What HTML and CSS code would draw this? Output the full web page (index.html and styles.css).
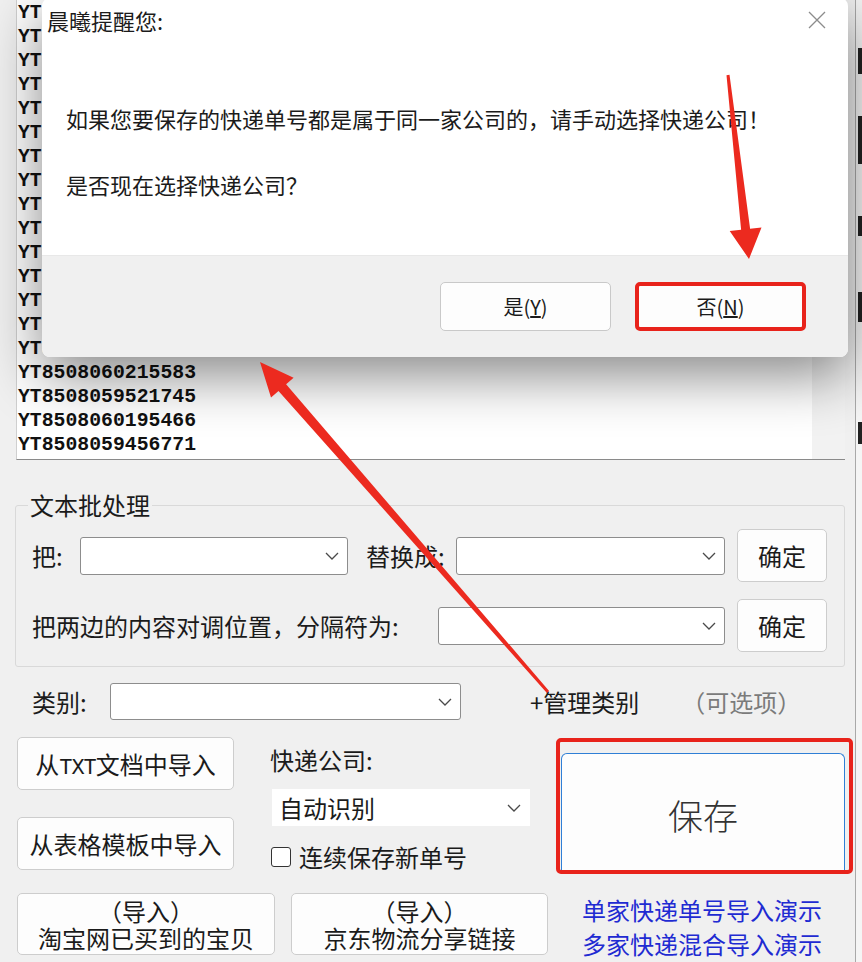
FILE: index.html
```html
<!DOCTYPE html>
<html lang="zh-CN">
<head>
    <meta charset="UTF-8">
    <meta name="viewport" content="width=device-width, initial-scale=1.0">
    <title>快递单号批量保存</title>
    <link rel="stylesheet" href="styles.css">
</head>
<body>
<div class="app">
    <div class="main">
        <!-- tracking number list -->
        <div class="log">
            <div class="lines">
                <div>YT8508060233517</div>
                <div>YT8508059687420</div>
                <div>YT8508060311284</div>
                <div>YT8508059772936</div>
                <div>YT8508060108853</div>
                <div>YT8508059840172</div>
                <div>YT8508060276341</div>
                <div>YT8508059519067</div>
                <div>YT8508060342798</div>
                <div>YT8508059663215</div>
                <div>YT8508060187450</div>
                <div>YT8508059724683</div>
                <div>YT8508060259132</div>
                <div>YT8508059498576</div>
                <div>YT8508060301949</div>
                <div>YT8508060215583</div>
                <div>YT8508059521745</div>
                <div>YT8508060195466</div>
                <div>YT8508059456771</div>
            </div>
            <div class="scrollbar"></div>
        </div>

        <div class="form">
            <fieldset class="batch">
                <legend>文本批处理</legend>
                <div class="row">
                    <span class="lbl w-ba">把:</span>
                    <div class="combo w-268"><svg class="chev" viewBox="0 0 14 8"><path d="M1 1l6 6 6-6"/></svg></div>
                    <span class="lbl w-replace">替换成:</span>
                    <div class="combo w-269"><svg class="chev" viewBox="0 0 14 8"><path d="M1 1l6 6 6-6"/></svg></div>
                    <button class="btn ok">确定</button>
                </div>
                <div class="row second">
                    <span class="lbl w-swap">把两边的内容对调位置，分隔符为:</span>
                    <div class="combo w-287"><svg class="chev" viewBox="0 0 14 8"><path d="M1 1l6 6 6-6"/></svg></div>
                    <button class="btn ok">确定</button>
                </div>
            </fieldset>

            <div class="category">
                <span class="lbl w-cat">类别:</span>
                <div class="combo short w-351"><svg class="chev" viewBox="0 0 14 8"><path d="M1 1l6 6 6-6"/></svg></div>
                <span class="manage">+管理类别</span>
                <span class="optional">（可选项）</span>
            </div>

            <div class="actions">
                <div class="imports">
                    <button class="btn import"><span>从<span class="latin">TXT</span>文档中导入</span></button>
                    <button class="btn import">从表格模板中导入</button>
                </div>
                <div class="courier">
                    <div class="courier-label">快递公司:</div>
                    <div class="courier-select">
                        <span>自动识别</span>
                        <svg class="chev" viewBox="0 0 14 8"><path d="M1 1l6 6 6-6"/></svg>
                    </div>
                    <label class="check"><span class="box"></span>连续保存新单号</label>
                </div>
                <div class="save-wrap">
                    <button class="save">保存</button>
                </div>
            </div>

            <div class="extras">
                <button class="btn wide w-258"><span>（导入）</span><span>淘宝网已买到的宝贝</span></button>
                <button class="btn wide w-257"><span>（导入）</span><span>京东物流分享链接</span></button>
                <div class="demo">
                    <a>单家快递单号导入演示</a>
                    <a>多家快递混合导入演示</a>
                </div>
            </div>
        </div>
    </div>
    <div class="edge">
        <span class="mark m1"></span>
        <span class="mark m2"></span>
        <span class="mark m3"></span>
        <span class="mark m4"></span>
        <span class="mark m5"></span>
    </div>

    <!-- message box on top -->
    <div class="dialog">
        <div class="dlg-body">
            <div class="dlg-head">
                <span class="dlg-title">晨曦提醒您:</span>
                <svg class="close" viewBox="0 0 18 18"><path d="M1 1l16 16M17 1L1 17"/></svg>
            </div>
            <p class="msg first">如果您要保存的快递单号都是属于同一家公司的，请手动选择快递公司！</p>
            <p class="msg">是否现在选择快递公司？</p>
        </div>
        <div class="dlg-foot">
            <button class="dlg-btn">是(<u>Y</u>)</button>
            <button class="dlg-btn focus">否(<u>N</u>)</button>
        </div>
    </div>

    <svg class="arrows" viewBox="0 0 862 962">
        <polygon points="729.5,74.8 726.5,75.2 741.1,229.7 729.7,231 749,259 761.5,227.4 750.1,228.7"/>
        <polygon points="549.1,691 546.9,693 278.5,390.9 271,397.5 260,362 293.6,377.7 286.1,384.3"/>
    </svg>
</div>
</body>
</html>
```

FILE: styles.css
```css
body {
    margin: 0;
    background: #f0f0f0;
}
button {
    font-family: inherit;
    color: inherit;
    padding: 0;
}
.app {
    position: relative;
    width: 862px;
    height: 962px;
    overflow: hidden;
    display: flex;
    background: #f0f0f0;
    font-family: "Noto Sans CJK SC", sans-serif;
    color: #1b1b1b;
}
.main {
    width: 855px;
}
.edge {
    flex: 1;
    border-left: 1px solid #a9a9a9;
    background: #f5f5f5;
    display: flex;
    flex-direction: column;
    align-items: flex-end;
}
.mark {
    width: 4px;
    background: #222;
}
.m1 { margin-top: 48px; height: 26px; }
.m2 { margin-top: 42px; height: 48px; }
.m3 { margin-top: 52px; height: 20px; }
.m4 { margin-top: 56px; height: 30px; }
.m5 { margin-top: 100px; height: 22px; }

/* list of numbers */
.log {
    margin-left: 16px;
    width: 829px;
    height: 460px;
    box-sizing: border-box;
    display: flex;
    background: #fff;
    border-left: 1px solid #cfcfcf;
    border-bottom: 1px solid #8a8a8a;
}
.lines {
    width: 794px;
    padding: 1px 0 0 1px;
    font: bold 19.8px/24px "Liberation Mono", monospace;
    color: #111;
}
.scrollbar {
    flex: 1;
    background: #f2f2f2;
}

/* form */
.form {
    padding-left: 15px;
}
.lbl {
    font-size: 24px;
    line-height: 30px;
    flex-shrink: 0;
}
.w-ba { width: 48px; }
.w-replace { width: 90px; margin-left: 18px; }
.w-swap { width: 406px; }
.w-cat { width: 78px; }
.w-268 { width: 268px; }
.w-269 { width: 269px; }
.w-287 { width: 287px; }
.w-351 { width: 351px; }
.w-258 { width: 258px; }
.w-257 { width: 257px; margin-left: 16px; }

.batch {
    margin: 30px 0 0;
    width: 830px;
    box-sizing: border-box;
    padding: 9px 17px 14px 16px;
    border: 1px solid #d9d9d9;
    border-radius: 3px;
}
.batch legend {
    margin-left: -4px;
    padding: 0 2px;
    font-size: 24px;
    line-height: 30px;
}
.row {
    display: flex;
    align-items: center;
    height: 53px;
}
.row.second {
    margin-top: 17px;
}
.combo {
    box-sizing: border-box;
    height: 38px;
    background: #fff;
    border: 1px solid #8d8d8d;
    border-radius: 3px;
    display: flex;
    align-items: center;
    justify-content: flex-end;
    padding-right: 8px;
    flex-shrink: 0;
}
.combo.short {
    height: 37px;
}
.chev {
    width: 14px;
    height: 8px;
    fill: none;
    stroke: #4a4a4a;
    stroke-width: 1.3;
}
.btn {
    box-sizing: border-box;
    background: #fdfdfd;
    border: 1px solid #cdcdcd;
    border-radius: 5px;
    font-size: 24px;
    display: flex;
    align-items: center;
    justify-content: center;
    flex-shrink: 0;
}
.btn.ok {
    width: 90px;
    height: 53px;
    margin-left: 12px;
}

.category {
    display: flex;
    align-items: center;
    margin-top: 16px;
    padding-left: 17px;
}
.manage {
    margin-left: 69px;
    font-size: 24px;
}
.optional {
    margin-left: 42px;
    font-size: 24px;
    color: #7b7b7b;
}

.actions {
    display: flex;
    margin-top: 17px;
    padding-left: 2px;
}
.imports {
    width: 217px;
    display: flex;
    flex-direction: column;
    gap: 27px;
}
.btn.import {
    height: 53px;
}
.latin {
    font-family: "Liberation Mono", monospace;
    font-size: 22px;
    letter-spacing: -1px;
}
.courier {
    margin-left: 36px;
    width: 260px;
}
.courier-label {
    margin-top: 8px;
    font-size: 24px;
    line-height: 30px;
}
.courier-select {
    margin: 14px 0 0 2px;
    width: 258px;
    height: 37px;
    box-sizing: border-box;
    background: #fff;
    display: flex;
    align-items: center;
    justify-content: space-between;
    padding: 0 9px 0 7px;
    font-size: 24px;
}
.check {
    margin-top: 18px;
    display: flex;
    align-items: center;
    font-size: 24px;
    line-height: 26px;
}
.box {
    width: 20px;
    height: 20px;
    box-sizing: border-box;
    margin: 0 8px 0 1px;
    border: 1.5px solid #333;
    border-radius: 3px;
    background: #fff;
}
.save-wrap {
    margin: 1px 0 0 26px;
    width: 297px;
    height: 136px;
    box-sizing: border-box;
    border: 4px solid #e8231b;
    border-radius: 5px;
    padding: 11px 4px 0 1px;
}
.save {
    width: 100%;
    height: 100%;
    box-sizing: border-box;
    background: #fdfdfd;
    border: 1.5px solid #2f7fd6;
    border-bottom: none;
    border-radius: 6px 6px 0 0;
    font-size: 35px;
    font-weight: 300;
    color: #333;
    padding-top: 4px;
}

.extras {
    display: flex;
    margin-top: 19px;
    padding-left: 2px;
}
.btn.wide {
    height: 62px;
    flex-direction: column;
    line-height: 27px;
}
.demo {
    margin-left: 34px;
    display: flex;
    flex-direction: column;
    font-size: 24px;
    line-height: 34px;
    color: #1f2bd2;
}

/* message box */
.dialog {
    position: absolute;
    left: 42px;
    top: -2px;
    width: 806px;
    height: 359px;
    border-radius: 8px;
    overflow: hidden;
    background: #fff;
    box-shadow: 0 18px 56px rgba(0, 0, 0, 0.48);
    display: flex;
    flex-direction: column;
}
.dlg-body {
    height: 257px;
    padding: 7px 22px 0 5px;
    box-sizing: border-box;
}
.dlg-head {
    display: flex;
    justify-content: space-between;
    align-items: center;
    height: 30px;
}
.dlg-title {
    font-size: 22px;
}
.close {
    width: 18px;
    height: 18px;
    fill: none;
    stroke: #8c8c8c;
    stroke-width: 1.3;
}
.msg {
    margin: 36px 0 0 19px;
    font-size: 22px;
    line-height: 30px;
}
.msg.first {
    margin-top: 68px;
}
.dlg-foot {
    flex: 1;
    background: #f0f0f0;
    border-top: 1px solid #e8e8e8;
    display: flex;
    align-items: center;
    justify-content: flex-end;
    gap: 24px;
    padding-right: 42px;
}
.dlg-btn {
    width: 171px;
    height: 49px;
    box-sizing: border-box;
    background: #fdfdfd;
    border: 1px solid #c9c9c9;
    border-radius: 5px;
    font-size: 20px;
}
.dlg-btn.focus {
    border: 4px solid #e8231b;
}

.arrows {
    position: absolute;
    left: 0;
    top: 0;
    width: 862px;
    height: 962px;
    fill: #ec2a1f;
    pointer-events: none;
}
```
